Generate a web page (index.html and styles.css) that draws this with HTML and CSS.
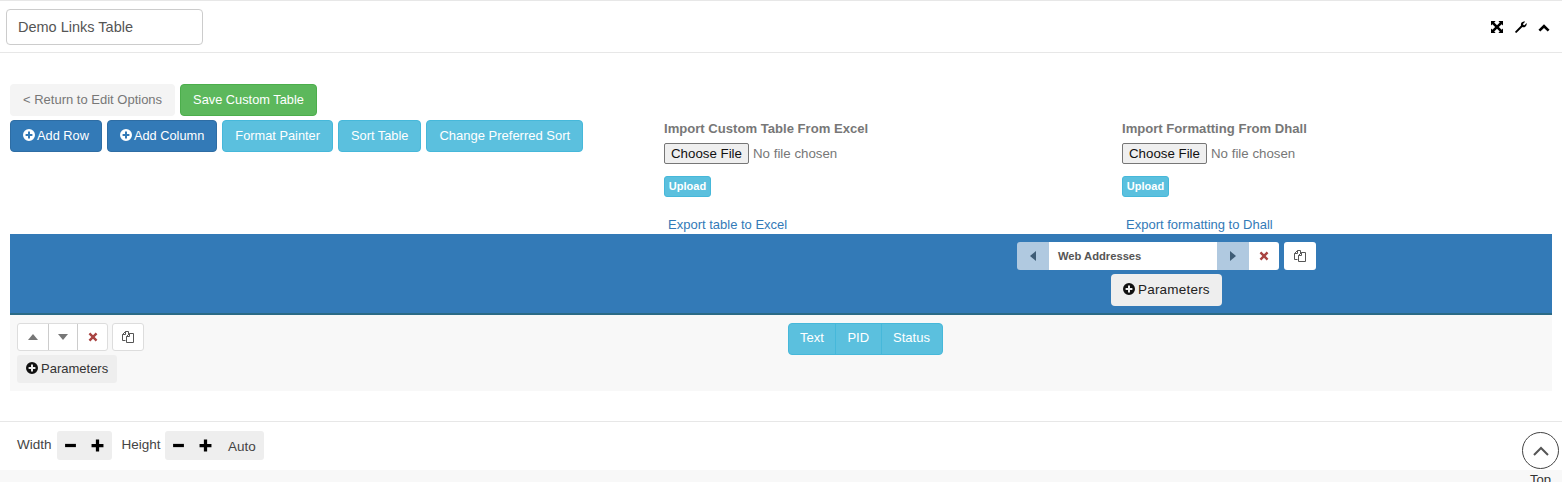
FILE: index.html
```html
<!DOCTYPE html>
<html lang="en">
<head>
    <meta charset="UTF-8">
    <title>Demo Links Table</title>
    <link rel="stylesheet" href="styles.css">
</head>
<body>
    <svg class="sprites" width="0" height="0">
        <symbol id="i-plus" viewBox="0 0 12 12"><path fill-rule="evenodd" d="M6 0a6 6 0 1 1 0 12A6 6 0 0 1 6 0zM5 2.600v2.400H2.600v2H5v2.400h2V7h2.400V5H7V2.600z"/></symbol>
        <symbol id="i-x" viewBox="0 0 10 10"><path d="M2.300.6 5 3.300 7.700.6l1.700 1.700L6.700 5l2.700 2.700-1.700 1.700L5 6.700 2.300 9.400.6 7.700 3.300 5 .6 2.300z"/></symbol>
        <symbol id="i-copy" viewBox="0 0 14 14"><path fill="none" stroke="currentColor" d="M4.500 10.500h-3v-6l3-3h3v3M4.500 1.500v3h-3M5.500 12.500v-6l3-3h4v9zM8.500 3.500v3h-3"/></symbol>
        <symbol id="i-minus" viewBox="0 0 12 12"><path d="M1 4.500h10v3H1z"/></symbol>
        <symbol id="i-add" viewBox="0 0 12 12"><path d="M4.500.5h3v4h4v3h-4v4h-3v-4h-4v-3h4z"/></symbol>
    </svg>

    <header class="panel-head">
        <input class="title-input" type="text" value="Demo Links Table">
        <div class="head-icons">
            <svg width="12" height="12" viewBox="0 0 13 13"><path d="M0 0h5L3.500 1.500 6.500 4.500 9.500 1.500 8 0h5v5L11.500 3.500 8.500 6.500 11.500 9.500 13 8v5H8l1.500-1.500-3-3-3 3L5 13H0V8l1.500 1.500 3-3-3-3L0 5z"/></svg>
            <svg width="12" height="12" viewBox="0 0 13 13"><path d="M.5 11 6.500 5C6 3 7 .800 9.500.500c.700-.100 1.200 0 1.500.200L8.800 2.900l.2 1.300 1.300.3L12.500 2.300c.4 1.500-.100 3-1.300 3.800-1 .7-2 .8-3.200.4L2 12.500c-.5.500-1 .5-1.500 0s-.5-1 0-1.500z"/></svg>
            <svg width="12" height="12" viewBox="0 -1 13 13"><path d="M6.500 2.500 12.500 8.500 10.500 10.500 6.500 6.500 2.500 10.500.5 8.500z"/></svg>
        </div>
    </header>

    <main class="editor">
        <section class="toolbar">
            <div class="toolbar-buttons">
                <div class="btn-row">
                    <button class="btn btn-default">&lt; Return to Edit Options</button>
                    <button class="btn btn-success">Save Custom Table</button>
                </div>
                <div class="btn-row">
                    <button class="btn btn-primary"><svg class="plus"><use href="#i-plus"/></svg>Add Row</button>
                    <button class="btn btn-primary"><svg class="plus"><use href="#i-plus"/></svg>Add Column</button>
                    <button class="btn btn-info">Format Painter</button>
                    <button class="btn btn-info">Sort Table</button>
                    <button class="btn btn-info btn-sort">Change Preferred Sort</button>
                </div>
            </div>
            <div class="import-col">
                <label class="import-label">Import Custom Table From Excel</label>
                <div class="file-row"><span class="file-btn">Choose File</span><span class="file-name">No file chosen</span></div>
                <button class="btn-upload">Upload</button>
                <a class="export-link" href="#">Export table to Excel</a>
            </div>
            <div class="import-col">
                <label class="import-label">Import Formatting From Dhall</label>
                <div class="file-row"><span class="file-btn">Choose File</span><span class="file-name">No file chosen</span></div>
                <button class="btn-upload">Upload</button>
                <a class="export-link" href="#">Export formatting to Dhall</a>
            </div>
        </section>

        <section class="table-head">
            <div class="column-tools">
                <div class="column-controls">
                    <div class="column-group">
                        <span class="arrow-btn"><i class="tri tri-left"></i></span>
                        <span class="column-name">Web Addresses</span>
                        <span class="arrow-btn"><i class="tri tri-right"></i></span>
                        <span class="ctl-btn ctl-x"><svg class="x-icon"><use href="#i-x"/></svg></span>
                    </div>
                    <span class="ctl-btn ctl-copy"><svg class="copy-icon"><use href="#i-copy"/></svg></span>
                </div>
                <button class="param-btn param-head"><svg class="plus"><use href="#i-plus"/></svg>Parameters</button>
            </div>
        </section>

        <section class="table-row">
            <div class="row-tools">
                <div class="row-controls">
                    <div class="row-group">
                        <span class="row-btn"><i class="tri tri-up"></i></span>
                        <span class="row-btn"><i class="tri tri-down"></i></span>
                        <span class="row-btn"><svg class="x-icon"><use href="#i-x"/></svg></span>
                    </div>
                    <span class="row-btn row-copy"><svg class="copy-icon"><use href="#i-copy"/></svg></span>
                </div>
                <button class="param-btn param-row"><svg class="plus"><use href="#i-plus"/></svg>Parameters</button>
            </div>
            <div class="cell-types">
                <span>Text</span><span>PID</span><span>Status</span>
            </div>
        </section>
    </main>

    <footer class="size-bar">
        <span class="size-label">Width</span>
        <div class="size-group">
            <span class="size-btn"><svg class="size-icon"><use href="#i-minus"/></svg></span>
            <span class="size-btn"><svg class="size-icon"><use href="#i-add"/></svg></span>
        </div>
        <span class="size-label size-height">Height</span>
        <div class="size-group">
            <span class="size-btn"><svg class="size-icon"><use href="#i-minus"/></svg></span>
            <span class="size-btn"><svg class="size-icon"><use href="#i-add"/></svg></span>
            <span class="size-auto">Auto</span>
        </div>
    </footer>
    <div class="page-bottom"></div>

    <a class="to-top" href="#">
        <span class="to-top-circle"><svg width="16" height="10" viewBox="0 0 16 10"><path fill="none" stroke="#555" stroke-width="2" d="M1 9l7-7 7 7"/></svg></span>
        <span class="to-top-text">Top</span>
    </a>
</body>
</html>
```

FILE: styles.css
```css
* {
    box-sizing: border-box;
}

html, body {
    height: 482px;
    overflow: hidden;
}

body {
    margin: 0;
    background: #fff;
    color: #333;
    font-family: "Liberation Sans", Arial, sans-serif;
    font-size: 13px;
    position: relative;
}

.sprites {
    position: absolute;
}

button {
    font-family: inherit;
}

/* Panel header */
.panel-head {
    height: 53px;
    border-top: 1px solid #e7e7e7;
    border-bottom: 1px solid #e7e7e7;
    padding: 8px 12px 0 6px;
    display: flex;
    justify-content: space-between;
}

.title-input {
    width: 197px;
    height: 36px;
    border: 1px solid #ccc;
    border-radius: 4px;
    padding: 0 11px;
    font-family: inherit;
    font-size: 14.500px;
    color: #555;
}

.head-icons {
    display: flex;
    gap: 11.500px;
    padding-top: 12px;
}

.head-icons svg {
    fill: #000;
}

/* Toolbar */
.editor {
    padding: 31px 10px 0;
}

.toolbar {
    height: 150px;
    display: grid;
    grid-template-columns: 654px 458px 1fr;
}

.btn-row {
    display: flex;
    gap: 5px;
    margin-bottom: 4px;
}

.btn {
    height: 32px;
    padding: 0 12px 2px;
    border: 1px solid transparent;
    border-radius: 4px;
    font-size: 12.800px;
    white-space: nowrap;
    display: inline-flex;
    align-items: center;
}

.btn-default {
    background: #f4f4f4;
    color: #777;
    font-size: 13px;
}

.btn-success {
    background: #5cb85c;
    border-color: #4cae4c;
    color: #fff;
}

.btn-primary {
    background: #337ab7;
    border-color: #2e6da4;
    color: #fff;
}

.btn-info {
    background: #5bc0de;
    border-color: #46b8da;
    color: #fff;
}

.btn-sort {
    font-size: 13px;
}

.plus {
    width: 12px;
    height: 12px;
    fill: currentColor;
    margin-right: 2px;
}

/* Import columns */
.import-col {
    padding-top: 37px;
}

.import-label {
    display: block;
    font-weight: bold;
    font-size: 13.100px;
    color: #777;
    line-height: 16px;
    margin-bottom: 6px;
}

.file-row {
    display: flex;
    align-items: center;
    height: 21px;
}

.file-btn {
    width: 85px;
    height: 21px;
    background: #efefef;
    border: 1px solid #767676;
    border-radius: 2px;
    color: #111;
    font-size: 13.300px;
    line-height: 19px;
    text-align: center;
}

.file-name {
    margin-left: 4px;
    color: #777;
    font-size: 13.300px;
}

.btn-upload {
    display: block;
    margin-top: 12px;
    width: 47px;
    height: 21px;
    padding: 0 0 2px;
    background: #5bc0de;
    border: 1px solid #46b8da;
    border-radius: 3px;
    color: #fff;
    font-size: 11px;
    font-weight: bold;
}

.export-link {
    display: block;
    margin: 20px 0 0 4px;
    color: #337ab7;
    font-size: 13px;
    line-height: 16px;
    text-decoration: none;
}

/* Blue header row */
.table-head {
    height: 81px;
    background: #337ab7;
    border-bottom: 2px solid #2b6a86;
    padding-top: 8px;
}

.column-tools {
    margin-left: 1007px;
    width: 299px;
    display: flex;
    flex-direction: column;
    align-items: center;
}

.column-controls {
    display: flex;
    gap: 5px;
    align-self: flex-start;
}

.column-group {
    display: flex;
    height: 28px;
    border-radius: 3px;
    overflow: hidden;
}

.arrow-btn {
    width: 32px;
    background: #b0c9e0;
    display: flex;
    align-items: center;
    justify-content: center;
}

.column-name {
    width: 168px;
    background: #fff;
    padding-left: 9px;
    color: #555;
    font-size: 11.200px;
    font-weight: bold;
    line-height: 28px;
}

.ctl-btn {
    background: #fff;
    display: flex;
    align-items: center;
    justify-content: center;
}

.ctl-x {
    width: 30px;
}

.ctl-copy {
    width: 32px;
    height: 28px;
    border-radius: 3px;
}

.x-icon {
    width: 10px;
    height: 10px;
    fill: #a94442;
}

.copy-icon {
    width: 14px;
    height: 14px;
    color: #555;
}

.tri {
    display: block;
    width: 0;
    height: 0;
    border-style: solid;
    border-color: transparent;
}

.tri-left {
    border-width: 5px 6px 5px 0;
    border-right-color: #3e5c76;
}

.tri-right {
    border-width: 5px 0 5px 6px;
    border-left-color: #3e5c76;
}

.tri-up {
    border-width: 0 5.500px 6px;
    border-bottom-color: #777;
}

.tri-down {
    border-width: 6px 5.500px 0;
    border-top-color: #777;
}

.param-btn {
    border: 0;
    display: inline-flex;
    align-items: center;
    border-radius: 4px;
    background: #eee;
}

.param-btn .plus {
    fill: #111;
    margin-right: 3px;
}

.param-head {
    margin-top: 4px;
    width: 111px;
    height: 32px;
    padding: 0 0 2px 12px;
    font-size: 13.500px;
    color: #222;
    letter-spacing: 0.2px;
}

/* Grey body row */
.table-row {
    height: 76px;
    background: #f8f8f8;
    padding: 8px 7px 0;
    display: flex;
}

.row-controls {
    display: flex;
    gap: 4px;
}

.row-group {
    display: flex;
    border: 1px solid #ddd;
    border-radius: 3px;
    background: #fff;
    overflow: hidden;
}

.row-group .row-btn + .row-btn {
    border-left: 1px solid #ccc;
}

.row-btn {
    width: 29.700px;
    height: 26px;
    display: flex;
    align-items: center;
    justify-content: center;
}

.row-copy {
    width: 32px;
    height: 28px;
    background: #fff;
    border: 1px solid #ddd;
    border-radius: 3px;
}

.param-row {
    margin-top: 4px;
    width: 100px;
    height: 28px;
    padding: 0 0 2px 9px;
    font-size: 13px;
    color: #333;
    border-radius: 3px;
}

.cell-types {
    margin-left: 644px;
    height: 32px;
    display: flex;
    background: #5bc0de;
    border: 1px solid #46b8da;
    border-radius: 4px;
    color: #fff;
    font-size: 13px;
    line-height: 27px;
}

.cell-types span {
    padding: 0 11.500px 0 11px;
    border-left: 1px solid #46b8da;
}

.cell-types span:first-child {
    border-left: 0;
}

.cell-types span:last-child {
    padding-left: 11.500px;
    padding-right: 12.500px;
}

/* Footer */
.size-bar {
    margin-top: 30px;
    height: 49px;
    border-top: 1px solid #e7e7e7;
    padding: 9px 0 0 17px;
    display: flex;
    align-items: flex-start;
}

.size-label {
    font-size: 13.500px;
    color: #444;
    line-height: 28px;
    margin-right: 5px;
}

.size-height {
    margin-left: 10px;
    margin-right: 4px;
}

.size-group {
    height: 29px;
    background: #eee;
    border-radius: 3px;
    display: flex;
    align-items: center;
    padding: 0 0.500px;
}

.size-btn {
    width: 27px;
    display: flex;
    justify-content: center;
}

.size-icon {
    width: 13px;
    height: 13px;
    fill: #000;
}

.size-auto {
    margin: 1px 8px 0 9px;
    font-size: 13.500px;
    color: #444;
}

.page-bottom {
    height: 12px;
    background: #f8f8f8;
}

/* Back to top */
.to-top {
    position: absolute;
    left: 1522px;
    top: 432px;
    width: 37px;
    color: #333;
    text-decoration: none;
    text-align: center;
}

.to-top-circle {
    display: flex;
    align-items: center;
    justify-content: center;
    width: 37px;
    height: 37px;
    border: 1px solid #444;
    border-radius: 50%;
    background: #fff;
}

.to-top-text {
    display: block;
    font-size: 13px;
    line-height: 15px;
    margin-top: 3px;
}
```
